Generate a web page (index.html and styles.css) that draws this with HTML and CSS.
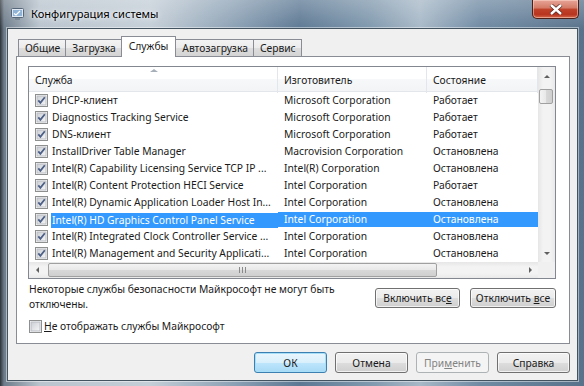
FILE: index.html
```html
<!DOCTYPE html>
<html lang="ru">
<head>
    <meta charset="UTF-8">
    <title>Конфигурация системы</title>
    <link rel="stylesheet" href="styles.css">
</head>
<body>
    <svg width="0" height="0" class="defs">
        <symbol id="chk" viewBox="0 0 13 13">
            <rect x="0.5" y="0.5" width="12" height="12" fill="#fff" stroke="#8e8f8f"/>
            <rect x="2" y="2" width="9" height="9" fill="url(#cbfill)" stroke="#b9bcc2" stroke-width="1"/>
            <path d="M3.3 6.4 L5.4 8.8 L9.8 3.2" fill="none" stroke="#4c5f86" stroke-width="1.8"/>
        </symbol>
        <symbol id="box" viewBox="0 0 13 13">
            <rect x="0.5" y="0.5" width="12" height="12" fill="#fff" stroke="#8e8f8f"/>
            <rect x="2" y="2" width="9" height="9" fill="url(#cbfill)" stroke="#b9bcc2" stroke-width="1"/>
        </symbol>
        <linearGradient id="cbfill" x1="0" y1="0" x2="1" y2="1">
            <stop offset="0" stop-color="#cbcfd5"/>
            <stop offset="1" stop-color="#f6f6f6"/>
        </linearGradient>
    </svg>

    <div class="window">
        <div class="titlebar">
            <svg class="app-icon" width="13" height="13" viewBox="0 0 13 13">
                <rect x="0.5" y="0.5" width="12" height="9" rx="1" fill="#dfe8f1" stroke="#56677a"/>
                <rect x="2" y="2" width="9" height="6" fill="#8fb4d8"/>
                <path d="M3 5.5 L5 7 L9 3" fill="none" stroke="#fff" stroke-width="1.2"/>
                <rect x="4" y="10" width="5" height="2" fill="#7b8896"/>
            </svg>
            <span class="title">Конфигурация системы</span>
            <button class="close-btn">
                <svg width="14" height="11" viewBox="0 0 14 11">
                    <path d="M2 1 L12 10 M12 1 L2 10" stroke="#5a2a20" stroke-width="4"/>
                    <path d="M2 1 L12 10 M12 1 L2 10" stroke="#fff" stroke-width="2.4"/>
                </svg>
            </button>
        </div>

        <div class="client">
            <div class="tabs">
                <div class="tab">Общие</div>
                <div class="tab">Загрузка</div>
                <div class="tab active">Службы</div>
                <div class="tab">Автозагрузка</div>
                <div class="tab">Сервис</div>
            </div>

            <div class="panel">
                <div class="list">
                    <div class="list-top">
                        <div class="list-view">
                            <div class="list-head">
                                <div class="hcell sorted">Служба</div>
                                <div class="hcell">Изготовитель</div>
                                <div class="hcell">Состояние</div>
                            </div>
                            <div class="list-rows" id="rows"></div>
                        </div>
                        <div class="vscroll">
                            <div class="arrow up"></div>
                            <div class="vtrack">
                                <div class="vthumb"></div>
                            </div>
                            <div class="arrow down"></div>
                        </div>
                    </div>
                    <div class="list-bottom">
                        <div class="hscroll">
                            <div class="arrow left"></div>
                            <div class="htrack">
                                <div class="hthumb"><span class="grip"></span></div>
                            </div>
                            <div class="arrow right"></div>
                        </div>
                        <div class="corner"></div>
                    </div>
                </div>

                <div class="note-row">
                    <p class="note">Некоторые службы безопасности Майкрософт не могут быть отключены.</p>
                    <div class="note-buttons">
                        <button class="btn wide-a">Включить вс<u>е</u></button>
                        <button class="btn wide-b">Отключить <u>в</u>се</button>
                    </div>
                </div>

                <label class="hide-ms">
                    <svg class="cb" width="13" height="13"><use href="#box"/></svg>
                    <span><u>Н</u>е отображать службы Майкрософт</span>
                </label>
            </div>

            <div class="dialog-buttons">
                <button class="btn default">ОК</button>
                <button class="btn">Отмена</button>
                <button class="btn" disabled>При<u>м</u>енить</button>
                <button class="btn">Справка</button>
            </div>
        </div>
    </div>

    <script src="app.js"></script>
</body>
</html>
```

FILE: app.js
```js
// строки списка служб
const services = [
    ['DHCP-клиент', 'Microsoft Corporation', 'Работает'],
    ['Diagnostics Tracking Service', 'Microsoft Corporation', 'Работает'],
    ['DNS-клиент', 'Microsoft Corporation', 'Работает'],
    ['InstallDriver Table Manager', 'Macrovision Corporation', 'Остановлена'],
    ['Intel(R) Capability Licensing Service TCP IP ...', 'Intel(R) Corporation', 'Остановлена'],
    ['Intel(R) Content Protection HECI Service', 'Intel Corporation', 'Работает'],
    ['Intel(R) Dynamic Application Loader Host In...', 'Intel Corporation', 'Остановлена'],
    ['Intel(R) HD Graphics Control Panel Service', 'Intel Corporation', 'Остановлена'],
    ['Intel(R) Integrated Clock Controller Service ...', 'Intel Corporation', 'Остановлена'],
    ['Intel(R) Management and Security Applicati...', 'Intel Corporation', 'Остановлена']
];
const selectedIndex = 7;

const rows = document.getElementById('rows');
rows.innerHTML = services.map((s, i) => `
    <div class="row${i === selectedIndex ? ' selected' : ''}">
        <div class="cell name">
            <svg class="cb" width="13" height="13"><use href="#chk"/></svg>
            <span class="label">${s[0]}</span>
        </div>
        <div class="cell">${s[1]}</div>
        <div class="cell">${s[2]}</div>
    </div>`).join('');
```

FILE: styles.css
```css
* {
    margin: 0;
    padding: 0;
    box-sizing: border-box;
}

body {
    width: 584px;
    height: 386px;
    overflow: hidden;
    font-family: "Noto Sans", "Open Sans", sans-serif;
    font-size: 10.3px;
    color: #1a1a1a;
}

.defs {
    position: absolute;
}

.window {
    width: 584px;
    height: 386px;
    display: flex;
    flex-direction: column;
    background:
        linear-gradient(180deg, rgba(255,255,255,0.25) 0, rgba(255,255,255,0) 30px),
        linear-gradient(90deg, #2c3238 0, #6d7c8a 4px, #b9c4ce 40px, #c4ced7 150px, #8ea3b6 230px, #5c7893 300px, #7f98ad 370px, #a7b8c7 420px, #6f8aa3 480px, #58728b 584px);
}

/* заголовок окна */
.titlebar {
    height: 28px;
    display: flex;
    align-items: flex-start;
    padding-left: 11px;
}

.app-icon {
    margin-top: 8px;
}

.title {
    margin-left: 7px;
    margin-top: 6px;
    font-size: 11.1px;
    color: #000;
    text-shadow: 0 0 6px rgba(255,255,255,0.9), 0 0 3px rgba(255,255,255,0.8);
}

.close-btn {
    margin-left: auto;
    margin-right: 5px;
    width: 47px;
    height: 19px;
    border: 1px solid #4a2018;
    border-top: none;
    border-radius: 0 0 5px 5px;
    background: linear-gradient(180deg, #e7a597 0, #d47a66 45%, #c0432b 50%, #b8341f 80%, #d2694b 100%);
    box-shadow: inset 0 0 0 1px rgba(255,220,210,0.5);
    display: flex;
    align-items: center;
    justify-content: center;
}

/* клиентская область */
.client {
    flex: 1;
    margin: 0 6px 5px 7px;
    background: #f0f0f0;
    border: 1px solid #43535f;
    box-shadow: 0 0 0 1px rgba(255,255,255,0.45);
    padding: 7px 7px 7px 8px;
    display: flex;
    flex-direction: column;
}

.tabs {
    display: flex;
    align-items: flex-end;
    height: 20px;
    padding-left: 2px;
    position: relative;
    z-index: 1;
}

.tab {
    height: 17px;
    line-height: 16px;
    padding: 0 5px 0 6px;
    border: 1px solid #898c95;
    border-bottom: none;
    background: linear-gradient(180deg, #f3f3f3 0, #ebebeb 50%, #dddddd 51%, #d4d4d4 100%);
    margin-right: -1px;
}

.tab.active {
    height: 21px;
    line-height: 18px;
    margin: 0 -1px -1px 0;
    padding: 0 7px;
    background: #fff;
    position: relative;
    z-index: 2;
}

.panel {
    flex: 1;
    background: #fff;
    border: 1px solid #898c95;
    padding: 9px 13px 0 11px;
}

/* список служб */
.list {
    width: 528px;
    height: 213px;
    border: 1px solid #828790;
    display: flex;
    flex-direction: column;
}

.list-top {
    display: flex;
    height: 195px;
}

.list-view {
    width: 509px;
}

.list-head,
.row {
    display: grid;
    grid-template-columns: 249px 149px 111px;
}

.list-head {
    height: 25px;
    background: linear-gradient(180deg, #ffffff 0, #ffffff 50%, #f7f8fa 51%, #f3f4f6 100%);
    border-bottom: 1px solid #e3e6ea;
}

.hcell {
    line-height: 26px;
    padding-left: 6px;
    border-right: 1px solid #e3e6ea;
    position: relative;
}

.hcell.sorted::before {
    content: "";
    position: absolute;
    left: 121px;
    top: 2px;
    border-left: 4px solid transparent;
    border-right: 4px solid transparent;
    border-bottom: 3px solid #a7afb9;
}

.row {
    height: 17px;
    line-height: 17px;
    white-space: nowrap;
}

.cell {
    padding-left: 6px;
    overflow: hidden;
}

.cell.name {
    display: flex;
    align-items: center;
    padding-left: 6px;
}

.cb {
    flex: none;
    margin-right: 3px;
}

.label {
    flex: 1;
    padding-left: 1px;
}

.row.selected .label,
.row.selected .cell:not(.name) {
    background: #3399ff;
    color: #fff;
    line-height: 15px;
    height: 15px;
    margin-top: 1px;
}

/* полосы прокрутки */
.vscroll {
    width: 17px;
    display: flex;
    flex-direction: column;
    background: linear-gradient(90deg, #e6e6e6, #f3f3f3 30%, #f3f3f3 70%, #e9e9e9);
}

.vtrack {
    flex: 1;
    position: relative;
}

.vthumb {
    position: absolute;
    left: 1px;
    top: 4px;
    width: 14px;
    height: 15px;
    border: 1px solid #a0a0a0;
    border-radius: 2px;
    background: linear-gradient(90deg, #f3f3f3, #e8e8e8 50%, #d8d8d8 51%, #cfcfcf);
}

.arrow {
    flex: none;
    width: 17px;
    height: 18px;
    position: relative;
}

.arrow::after {
    content: "";
    position: absolute;
    left: 50%;
    top: 50%;
}

.arrow.up::after {
    margin: -1px 0 0 -3px;
    border-left: 3px solid transparent;
    border-right: 3px solid transparent;
    border-bottom: 3px solid #606060;
}

.arrow.down::after {
    margin: -1px 0 0 -3px;
    border-left: 3px solid transparent;
    border-right: 3px solid transparent;
    border-top: 3px solid #606060;
}

.arrow.left::after {
    margin: -3px 0 0 -2px;
    border-top: 3px solid transparent;
    border-bottom: 3px solid transparent;
    border-right: 3px solid #606060;
}

.arrow.right::after {
    margin: -3px 0 0 -1px;
    border-top: 3px solid transparent;
    border-bottom: 3px solid transparent;
    border-left: 3px solid #606060;
}

.list-bottom {
    display: flex;
    height: 16px;
}

.hscroll {
    width: 509px;
    display: flex;
    background: linear-gradient(180deg, #e6e6e6, #f3f3f3 30%, #f3f3f3 70%, #e9e9e9);
}

.hscroll .arrow {
    height: 16px;
}

.htrack {
    flex: 1;
    position: relative;
}

.hthumb {
    position: absolute;
    left: 2px;
    top: 1px;
    width: 389px;
    height: 14px;
    border: 1px solid #a0a0a0;
    border-radius: 2px;
    background: linear-gradient(180deg, #f3f3f3, #e8e8e8 50%, #d8d8d8 51%, #cfcfcf);
    display: flex;
    align-items: center;
    justify-content: center;
}

.grip {
    width: 7px;
    height: 6px;
    border-left: 1px solid #8a8a8a;
    border-right: 1px solid #8a8a8a;
    position: relative;
}

.grip::after {
    content: "";
    position: absolute;
    left: 2px;
    top: 0;
    height: 6px;
    border-left: 1px solid #8a8a8a;
}

.corner {
    flex: 1;
    background: #f0f0f0;
}

/* под списком */
.note-row {
    display: flex;
    margin-top: 3px;
}

.note {
    flex: 1;
    line-height: 15px;
    padding-left: 1px;
    padding-right: 20px;
}

.note-buttons {
    display: flex;
    gap: 10px;
    padding-top: 6px;
}

.hide-ms {
    display: flex;
    align-items: center;
    margin-top: 7px;
    padding-left: 1px;
    line-height: 15px;
}

.hide-ms .cb {
    margin-right: 2px;
}

/* кнопки */
.btn {
    height: 21px;
    font-family: inherit;
    font-size: 10.3px;
    color: #1a1a1a;
    border: 1px solid #707070;
    border-radius: 3px;
    background: linear-gradient(180deg, #f2f2f2 0, #ebebeb 50%, #dddddd 51%, #cfcfcf 100%);
    box-shadow: inset 0 0 0 1px rgba(255,255,255,0.7);
}

.btn u {
    text-decoration-thickness: 1px;
}

.note-buttons .btn {
    height: 20px;
}

.wide-a {
    width: 85px;
}

.wide-b {
    width: 86px;
}

.dialog-buttons {
    display: flex;
    justify-content: flex-end;
    gap: 8px;
    margin-top: 8px;
}

.dialog-buttons .btn {
    width: 73px;
}

.btn.default {
    border-color: #3c7fb1;
    box-shadow: inset 0 0 0 1px #a6dff7;
    background: linear-gradient(180deg, #eaf6fd 0, #d9f0fc 50%, #bee6fd 51%, #a7d9f5 100%);
}

.btn:disabled {
    border-color: #adb2b5;
    background: #f4f4f4;
    color: #838383;
    box-shadow: none;
}
```
